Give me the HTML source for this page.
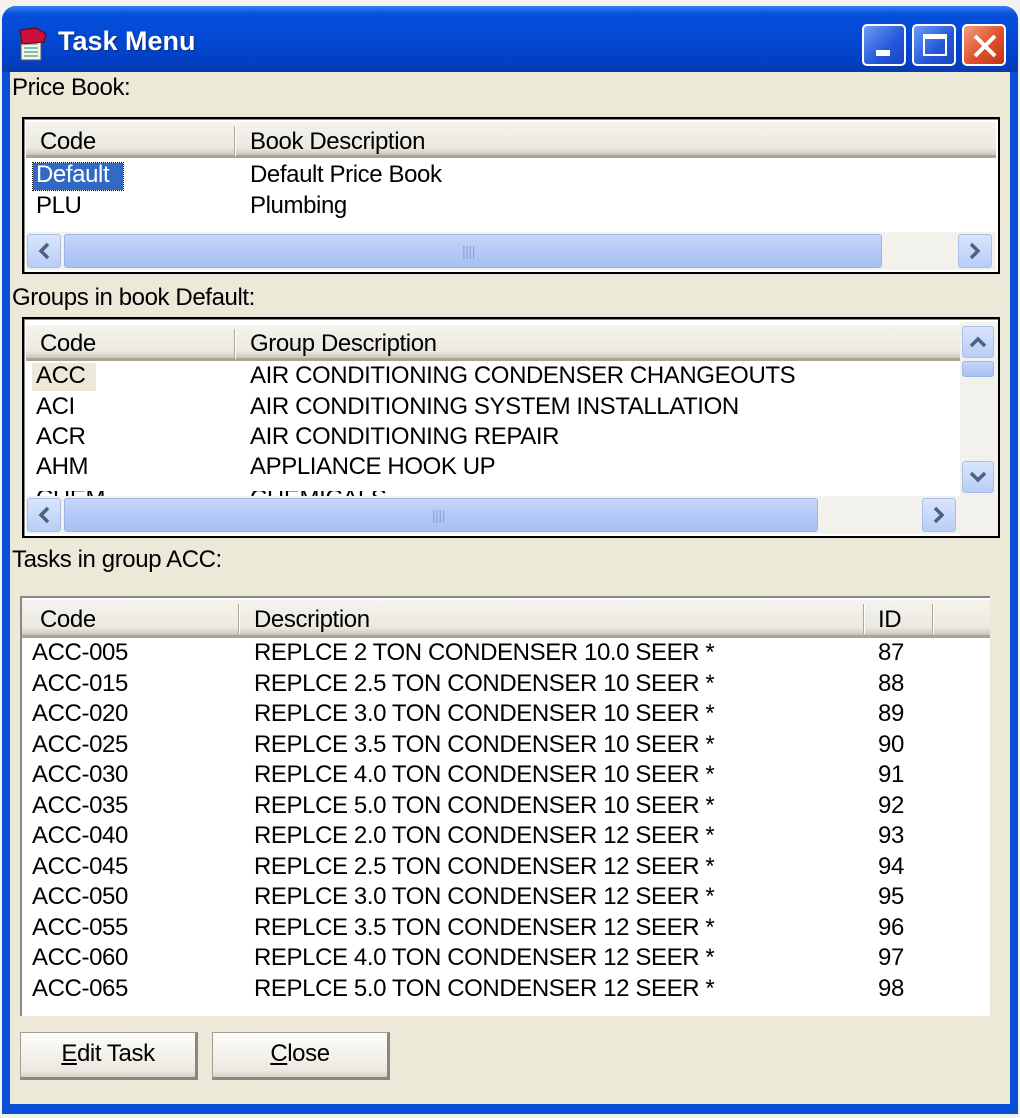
<!DOCTYPE html>
<html><head><meta charset="utf-8"><style>
*{margin:0;padding:0;box-sizing:border-box}
body{width:1020px;height:1118px;background:#f2f2f0;position:relative;overflow:hidden;font-family:"Liberation Sans",sans-serif;font-size:24px;letter-spacing:-0.4px;color:#000}
.a{position:absolute}
.win{left:2px;top:6px;width:1016px;height:1108px;background:#0a4fd8;border-radius:14px 14px 0 0}
.title{left:2px;top:6px;width:1016px;height:66px;border-radius:14px 14px 0 0;background:linear-gradient(#3a80ee 0,#0650dc 12%,#0348d2 50%,#023fc4 85%,#0a3aa8 100%)}
.body{left:10px;top:72px;width:1000px;height:1032px;background:#ece9d8}
.tb{font-weight:bold;color:#fff;font-size:27px;left:58px;top:26px;text-shadow:1px 1px 1px #0a2a80;letter-spacing:0}
.btn{top:24px;width:44px;height:42px;border:2px solid #fff;border-radius:5px;background:linear-gradient(135deg,#6d9cf5,#2357d8 60%,#1b47c0)}
.lv{background:#fff}
.hdr{background:linear-gradient(#f4f3ee,#ebe9df 80%,#c8c5b8);height:36px;border-bottom:3px solid #a8a595}
.sep{top:4px;width:2px;height:30px;background:#aca899;border-right:1px solid #fff}
.t{position:absolute;white-space:nowrap;line-height:30px}
.hs{background:#f3f1ec}
.arr{background:linear-gradient(#d9e5fd,#b8cdf6);border:1px solid #a9bfe8;border-radius:3px}
.arr svg{position:absolute;left:50%;top:50%;transform:translate(-50%,-50%)}
.thumb{background:linear-gradient(#c7d7fb,#b4c9f6 50%,#a8c0f3);border:1px solid #9db4e6;border-radius:3px}
.pb{border:2px solid #000;box-shadow:inset 1px 1px 0 #888}
.b{top:1032px;width:178px;height:48px;background:linear-gradient(#fdfdfb,#ece9e0 85%,#d6d0c5);border:1px solid #a0a090;border-right:3px solid #8a887c;border-bottom:3px solid #8a887c;text-align:center;line-height:42px}
</style></head><body>
<div class="a win"></div>
<div class="a title"></div>
<div class="a body"></div>
<svg class="a" style="left:16px;top:26px" width="34" height="36" viewBox="0 0 34 36"><rect x="5" y="10" width="20" height="24" fill="#f4f4ea" stroke="#555"/><path d="M8 18h14M8 22h14M8 26h14M8 30h14" stroke="#6a9" stroke-width="1.5"/><path d="M4 4l16-2 10 6-2 8-22 2z" fill="#c8103a" stroke="#600"/></svg>
<div class="a tb">Task Menu</div>
<div class="a btn" style="left:862px"><div class="a" style="left:12px;top:24px;width:14px;height:6px;background:#fff"></div></div>
<div class="a btn" style="left:912px"><div class="a" style="left:9px;top:8px;width:24px;height:22px;border:2px solid #fff;border-top-width:5px"></div></div>
<div class="a btn" style="left:962px;background:linear-gradient(135deg,#f0a080,#e0502a 55%,#c03418)"><svg class="a" style="left:7px;top:6px" width="28" height="28"><path d="M4 4L24 24M24 4L4 24" stroke="#fff" stroke-width="4"/></svg></div>

<div class="t" style="left:12px;top:73px">Price Book:</div>
<div class="a lv pb" style="left:22px;top:117px;width:978px;height:157px">
 <div class="a hdr" style="left:2px;top:3px;width:970px"></div>
 <div class="a sep" style="left:210px;top:7px"></div>
 <div class="t" style="left:16px;top:8px">Code</div>
 <div class="t" style="left:226px;top:8px">Book Description</div>
 <div class="a" style="left:9px;top:44px;width:90px;height:27px;background:#316ac5;outline:1px dotted #000"></div>
 <div class="t" style="left:12px;top:41px;color:#fff">Default</div>
 <div class="t" style="left:226px;top:41px">Default Price Book</div>
 <div class="t" style="left:12px;top:72px">PLU</div>
 <div class="t" style="left:226px;top:72px">Plumbing</div>
 <div class="a hs" style="left:2px;top:113px;width:970px;height:38px"></div>
 <div class="a arr" style="left:3px;top:115px;width:34px;height:34px"><svg width="14" height="18"><path d="M11 2L4 9l7 7" fill="none" stroke="#4d6185" stroke-width="3.5"/></svg></div>
 <div class="a thumb" style="left:40px;top:115px;width:818px;height:34px"></div>
 <div class="t" style="left:438px;top:117px;color:#8aa3d6;font-size:14px">||||</div>
 <div class="a arr" style="left:934px;top:115px;width:34px;height:34px"><svg width="14" height="18"><path d="M3 2l7 7-7 7" fill="none" stroke="#4d6185" stroke-width="3.5"/></svg></div>
</div>

<div class="t" style="left:12px;top:283px">Groups in book Default:</div>
<div class="a lv pb" style="left:22px;top:317px;width:978px;height:221px">
 <div class="a hdr" style="left:2px;top:6px;width:934px"></div>
 <div class="a sep" style="left:210px;top:10px"></div>
 <div class="t" style="left:16px;top:10px">Code</div>
 <div class="t" style="left:226px;top:10px">Group Description</div>
 <div class="a" style="left:8px;top:44px;width:64px;height:28px;background:#ece9d8"></div>
 <div class="t" style="left:12px;top:42px">ACC</div><div class="t" style="left:226px;top:42px">AIR CONDITIONING CONDENSER CHANGEOUTS</div>
 <div class="t" style="left:12px;top:73px">ACI</div><div class="t" style="left:226px;top:73px">AIR CONDITIONING SYSTEM INSTALLATION</div>
 <div class="t" style="left:12px;top:103px">ACR</div><div class="t" style="left:226px;top:103px">AIR CONDITIONING REPAIR</div>
 <div class="t" style="left:12px;top:133px">AHM</div><div class="t" style="left:226px;top:133px">APPLIANCE HOOK UP</div>
 <div class="a" style="left:0;top:172px;width:934px;height:8px;overflow:hidden"><div class="t" style="left:12px;top:-7px">CHEM</div><div class="t" style="left:226px;top:-7px">CHEMICALS</div></div>
 <div class="a hs" style="left:936px;top:3px;width:38px;height:214px"></div>
 <div class="a arr" style="left:938px;top:7px;width:32px;height:32px"><svg width="18" height="14"><path d="M2 11l7-7 7 7" fill="none" stroke="#4d6185" stroke-width="3.5"/></svg></div>
 <div class="a thumb" style="left:938px;top:42px;width:32px;height:16px"></div>
 <div class="a arr" style="left:938px;top:142px;width:32px;height:32px"><svg width="18" height="14"><path d="M2 3l7 7 7-7" fill="none" stroke="#4d6185" stroke-width="3.5"/></svg></div>
 <div class="a hs" style="left:2px;top:177px;width:934px;height:38px"></div>
 <div class="a arr" style="left:3px;top:179px;width:34px;height:34px"><svg width="14" height="18"><path d="M11 2L4 9l7 7" fill="none" stroke="#4d6185" stroke-width="3.5"/></svg></div>
 <div class="a thumb" style="left:40px;top:179px;width:754px;height:34px"></div>
 <div class="t" style="left:408px;top:181px;color:#8aa3d6;font-size:14px">||||</div>
 <div class="a arr" style="left:898px;top:179px;width:34px;height:34px"><svg width="14" height="18"><path d="M3 2l7 7-7 7" fill="none" stroke="#4d6185" stroke-width="3.5"/></svg></div>
</div>

<div class="t" style="left:12px;top:545px">Tasks in group ACC:</div>
<div class="a lv" style="left:20px;top:596px;width:970px;height:420px;border-left:2px solid #888;border-top:2px solid #888">
 <div class="a hdr" style="left:0;top:2px;width:968px;height:38px"></div>
 <div class="a sep" style="left:216px;top:6px"></div>
 <div class="a sep" style="left:841px;top:6px"></div>
 <div class="a sep" style="left:910px;top:6px"></div>
 <div class="t" style="left:18px;top:7px">Code</div>
 <div class="t" style="left:232px;top:7px">Description</div>
 <div class="t" style="left:856px;top:7px">ID</div>
</div>
<div class="a" style="left:32px;top:638px;line-height:30.5px">ACC-005<br>ACC-015<br>ACC-020<br>ACC-025<br>ACC-030<br>ACC-035<br>ACC-040<br>ACC-045<br>ACC-050<br>ACC-055<br>ACC-060<br>ACC-065</div>
<div class="a" style="left:254px;top:638px;line-height:30.5px;white-space:nowrap">REPLCE 2 TON CONDENSER 10.0 SEER *<br>REPLCE 2.5 TON CONDENSER 10 SEER *<br>REPLCE 3.0 TON CONDENSER 10 SEER *<br>REPLCE 3.5 TON CONDENSER 10 SEER *<br>REPLCE 4.0 TON CONDENSER 10 SEER *<br>REPLCE 5.0 TON CONDENSER 10 SEER *<br>REPLCE 2.0 TON CONDENSER 12 SEER *<br>REPLCE 2.5 TON CONDENSER 12 SEER *<br>REPLCE 3.0 TON CONDENSER 12 SEER *<br>REPLCE 3.5 TON CONDENSER 12 SEER *<br>REPLCE 4.0 TON CONDENSER 12 SEER *<br>REPLCE 5.0 TON CONDENSER 12 SEER *</div>
<div class="a" style="left:878px;top:638px;line-height:30.5px">87<br>88<br>89<br>90<br>91<br>92<br>93<br>94<br>95<br>96<br>97<br>98</div>

<div class="a b" style="left:20px"><u>E</u>dit Task</div>
<div class="a b" style="left:212px"><u>C</u>lose</div>
</body></html>
